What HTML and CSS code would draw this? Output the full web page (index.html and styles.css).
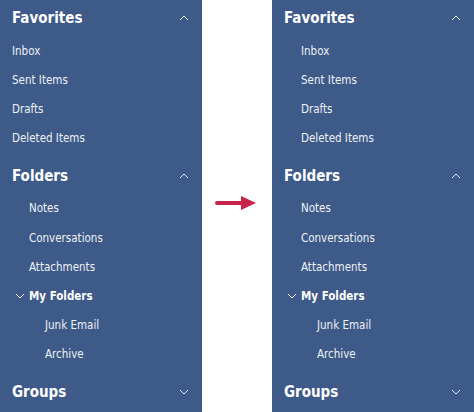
FILE: index.html
```html
<!DOCTYPE html>
<html>
<head>
<meta charset="utf-8">
<link rel="stylesheet" href="styles.css">
</head>
<body>
<div class="page">
  <nav class="panel">
    <section class="group">
      <div class="head"><span>Favorites</span><svg class="chev" viewBox="0 0 10 6"><polyline points="1,5 5,1 9,5"/></svg></div>
      <div class="item">Inbox</div>
      <div class="item">Sent Items</div>
      <div class="item">Drafts</div>
      <div class="item">Deleted Items</div>
    </section>
    <section class="group">
      <div class="head"><span>Folders</span><svg class="chev" viewBox="0 0 10 6"><polyline points="1,5 5,1 9,5"/></svg></div>
      <div class="item l2">Notes</div>
      <div class="item l2">Conversations</div>
      <div class="item l2">Attachments</div>
      <div class="item sub"><svg class="subchev" viewBox="0 0 10 6"><polyline points="1,1 5,5 9,1"/></svg>My Folders</div>
      <div class="item l3">Junk Email</div>
      <div class="item l3">Archive</div>
    </section>
    <section class="group">
      <div class="head"><span>Groups</span><svg class="chev" viewBox="0 0 10 6"><polyline points="1,1 5,5 9,1"/></svg></div>
    </section>
  </nav>
  <div class="gap">
    <svg class="arrow" viewBox="0 0 42 16"><line x1="2" y1="8" x2="28" y2="8"/><polygon points="26,1 41,8 26,15"/></svg>
  </div>
  <nav class="panel">
    <section class="group">
      <div class="head"><span>Favorites</span><svg class="chev" viewBox="0 0 10 6"><polyline points="1,5 5,1 9,5"/></svg></div>
      <div class="item l2">Inbox</div>
      <div class="item l2">Sent Items</div>
      <div class="item l2">Drafts</div>
      <div class="item l2">Deleted Items</div>
    </section>
    <section class="group">
      <div class="head"><span>Folders</span><svg class="chev" viewBox="0 0 10 6"><polyline points="1,5 5,1 9,5"/></svg></div>
      <div class="item l2">Notes</div>
      <div class="item l2">Conversations</div>
      <div class="item l2">Attachments</div>
      <div class="item sub"><svg class="subchev" viewBox="0 0 10 6"><polyline points="1,1 5,5 9,1"/></svg>My Folders</div>
      <div class="item l3">Junk Email</div>
      <div class="item l3">Archive</div>
    </section>
    <section class="group">
      <div class="head"><span>Groups</span><svg class="chev" viewBox="0 0 10 6"><polyline points="1,1 5,5 9,1"/></svg></div>
    </section>
  </nav>
</div>
</body>
</html>
```
FILE: styles.css
```css
html, body {
  margin: 0;
  padding: 0;
  background: #ffffff;
}
.page {
  display: flex;
  width: 474px;
  height: 412px;
  font-family: "DejaVu Sans", sans-serif;
  font-stretch: condensed;
}
.panel {
  width: 202px;
  height: 412px;
  background: #3d5a89;
  color: #eef1f6;
  flex: none;
}
.gap {
  width: 70px;
  flex: none;
  display: flex;
  align-items: center;
  justify-content: center;
}
.arrow {
  width: 42px;
  height: 16px;
  margin-left: -2px;
  margin-top: -6px;
}
.arrow line {
  stroke: #c8234a;
  stroke-width: 4;
  stroke-linecap: round;
}
.arrow polygon {
  fill: #c8234a;
}
.group + .group {
  margin-top: 5px;
}
.head {
  height: 36px;
  display: flex;
  align-items: center;
  justify-content: space-between;
  padding: 0 13px 0 12px;
  font-size: 15px;
  font-weight: bold;
  color: #ffffff;
}
.chev {
  width: 10px;
  height: 6px;
  fill: none;
  stroke: rgba(255, 255, 255, 0.85);
  stroke-width: 1;
}
.item {
  height: 29.2px;
  display: flex;
  align-items: center;
  padding-left: 12px;
  font-size: 11.5px;
}
.item.l2 {
  padding-left: 29px;
}
.item.l3 {
  padding-left: 45px;
}
.item.sub {
  padding-left: 15px;
  font-weight: bold;
  color: #ffffff;
}
.subchev {
  width: 10px;
  height: 6px;
  margin-right: 4px;
  fill: none;
  stroke: rgba(255, 255, 255, 0.9);
  stroke-width: 1;
}
```
